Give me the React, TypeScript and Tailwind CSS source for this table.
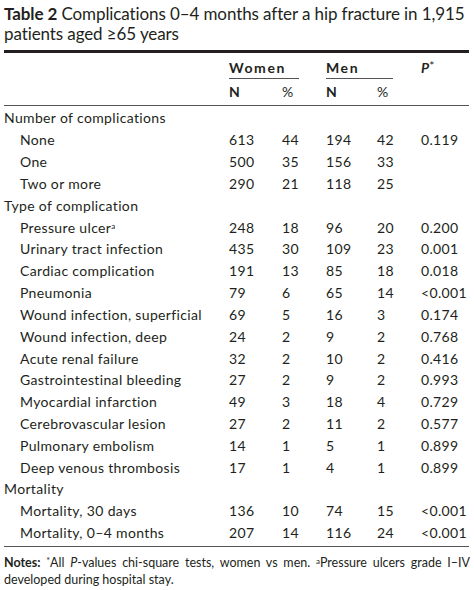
const rows: { label: string; indent?: boolean; sup?: string; v?: string[] }[] = [
  { label: "Number of complications" },
  { label: "None", indent: true, v: ["613", "44", "194", "42", "0.119"] },
  { label: "One", indent: true, v: ["500", "35", "156", "33", ""] },
  { label: "Two or more", indent: true, v: ["290", "21", "118", "25", ""] },
  { label: "Type of complication" },
  { label: "Pressure ulcer", sup: "a", indent: true, v: ["248", "18", "96", "20", "0.200"] },
  { label: "Urinary tract infection", indent: true, v: ["435", "30", "109", "23", "0.001"] },
  { label: "Cardiac complication", indent: true, v: ["191", "13", "85", "18", "0.018"] },
  { label: "Pneumonia", indent: true, v: ["79", "6", "65", "14", "<0.001"] },
  { label: "Wound infection, superficial", indent: true, v: ["69", "5", "16", "3", "0.174"] },
  { label: "Wound infection, deep", indent: true, v: ["24", "2", "9", "2", "0.768"] },
  { label: "Acute renal failure", indent: true, v: ["32", "2", "10", "2", "0.416"] },
  { label: "Gastrointestinal bleeding", indent: true, v: ["27", "2", "9", "2", "0.993"] },
  { label: "Myocardial infarction", indent: true, v: ["49", "3", "18", "4", "0.729"] },
  { label: "Cerebrovascular lesion", indent: true, v: ["27", "2", "11", "2", "0.577"] },
  { label: "Pulmonary embolism", indent: true, v: ["14", "1", "5", "1", "0.899"] },
  { label: "Deep venous thrombosis", indent: true, v: ["17", "1", "4", "1", "0.899"] },
  { label: "Mortality" },
  { label: "Mortality, 30 days", indent: true, v: ["136", "10", "74", "15", "<0.001"] },
  { label: "Mortality, 0–4 months", indent: true, v: ["207", "14", "116", "24", "<0.001"] },
];

const cols = "grid grid-cols-[225px_53px_44px_51px_44px_1fr]";

export default function App() {
  return (
    <div
      className="w-[474px] h-[590px] bg-white text-[#231f20] px-[4px] pt-[4px]"
      style={{ fontFamily: "Lato, 'Open Sans', sans-serif" }}
    >
      <h1 className="text-[17px] leading-[20px] tracking-[-0.1px]">
        <span className="font-bold">Table 2</span> Complications 0–4 months after a hip fracture in 1,915 patients aged ≥65 years
      </h1>

      <div className="mt-[6px] w-[465px] border-t-[3px] border-[#231f20]" />

      <div className={`${cols} text-[14px] mt-[5px]`}>
        <div />
        <div className="col-span-2 pt-[1px] w-[70px] h-[21px] border-b border-[#555] font-bold tracking-[1.6px] leading-[18px]">
          Women
        </div>
        <div className="col-span-2 pt-[1px] w-[67px] h-[21px] border-b border-[#555] font-bold tracking-[1.6px] leading-[18px]">
          Men
        </div>
        <div className="pt-[1px] leading-[18px] font-bold italic">
          P<span className="relative -top-[3px] not-italic font-normal text-[12px]">*</span>
        </div>
      </div>

      <div className={`${cols} text-[14px] font-bold h-[26px] items-center pb-[1px]`}>
        <div />
        <div>N</div>
        <div className="font-normal">%</div>
        <div>N</div>
        <div className="font-normal">%</div>
        <div />
      </div>

      <div className="w-[465px] border-t border-[#555]" />

      <div className="text-[14px] tracking-[0.35px] pt-[1px]">
        {rows.map((r) => (
          <div key={r.label} className={`${cols} h-[21.84px] items-center`}>
            <div className={r.indent ? "pl-[16px]" : ""}>
              {r.label}
              {r.sup && <span className="relative -top-[4px] text-[8px]">{r.sup}</span>}
            </div>
            {r.v?.map((x, i) => <div key={i}>{x}</div>)}
          </div>
        ))}
      </div>

      <div className="mt-[2px] w-[465px] border-t border-[#555]" />

      <p className="mt-[8px] w-[466px] text-[12.5px] leading-[16px] text-justify">
        <span className="font-bold">Notes:</span> <span className="relative -top-[3px] text-[9px]">*</span>All{" "}
        <i>P</i>-values chi-square tests, women vs men. <span className="relative -top-[3px] text-[8px]">a</span>Pressure
        ulcers grade I–IV developed during hospital stay.
      </p>
    </div>
  );
}
